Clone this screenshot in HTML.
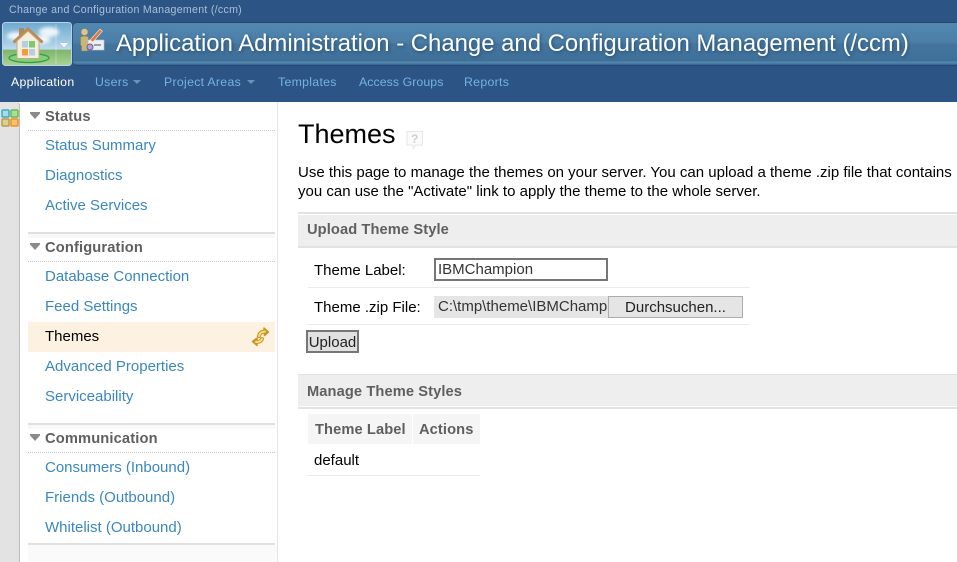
<!DOCTYPE html>
<html><head><meta charset="utf-8">
<style>
html,body{margin:0;padding:0;background:#fff}
body{width:957px;height:562px;overflow:hidden;position:relative;font-family:"Liberation Sans",sans-serif;font-size:15px;color:#000}
.a{position:absolute;white-space:nowrap}
.l{color:#3a87bd;font-size:15px;left:45px;line-height:18px}
.h{color:#5f5f5f;font-weight:bold;font-size:14.67px;left:45px;line-height:18px;letter-spacing:.15px}
.n{color:#74b3e0;font-size:12.3px;top:74px;line-height:16px;letter-spacing:.3px}
.st{left:307px;color:#5f5f5f;font-weight:bold;font-size:14.67px;line-height:18px;letter-spacing:.1px}
.line{position:absolute;height:1px;background:#eaeaea}
.dot{position:absolute;left:28px;width:247px;border-top:1px dotted #c8c8c8}
.sep{position:absolute;left:28px;width:247px;height:2px;background:#e0e0e0}
.tri{position:absolute;left:30px;width:10px;height:7px;background:#8a8a8a;clip-path:polygon(0 0,100% 0,100% 20%,50% 100%,0 20%)}
.ct{position:absolute;width:0;height:0;border-left:4px solid transparent;border-right:4px solid transparent;border-top:4px solid #6a93b8}
</style></head><body>
<div class="a" style="left:0;top:0;width:957px;height:102px;background:#2c5585"></div>
<div class="a" style="left:9px;top:3px;color:#a9c0d8;font-size:10.6px;line-height:14px;letter-spacing:.29px">Change and Configuration Management (/ccm)</div>

<svg class="a" style="left:2px;top:22px" width="70" height="44" viewBox="0 0 70 44">
<defs>
<linearGradient id="g" x1="0" y1="0" x2="0" y2="1"><stop offset="0" stop-color="#6fa9cf"/><stop offset=".5" stop-color="#a9cfe6"/><stop offset=".62" stop-color="#bcdcec"/><stop offset=".64" stop-color="#7fb56e"/><stop offset="1" stop-color="#a9d592"/></linearGradient>
<filter id="b" x="-20%" y="-20%" width="140%" height="140%"><feGaussianBlur stdDeviation="1.800"/></filter>
</defs>
<rect x=".5" y=".5" width="69" height="43" rx="3" fill="url(#g)" stroke="#b6d4e4"/>
<g filter="url(#b)" fill="#fff" fill-opacity=".85"><ellipse cx="14" cy="14" rx="9" ry="4"/><ellipse cx="47" cy="10" rx="10" ry="5"/><ellipse cx="38" cy="18" rx="10" ry="4"/></g>
<ellipse cx="27" cy="36" rx="20" ry="4.500" fill="#7fd27a" stroke="#3f9a45" stroke-width="1.300"/>
<rect x="17" y="6" width="5" height="10" fill="#a98a63"/>
<path d="M11.500 20.500 26 7 40.500 20.500" fill="none" stroke="#b98b55" stroke-width="3"/>
<path d="M15 19 26 9 37 19V36.500H15Z" fill="#f5eedd" stroke="#c9a97c"/>
<rect x="20" y="19" width="6" height="6.500" fill="#b3cfe6"/><rect x="27" y="19" width="6" height="6.500" fill="#7cc873"/>
<rect x="20" y="27" width="6" height="6.500" fill="#ef9b40"/><rect x="27" y="27" width="6" height="6.500" fill="#b3cfe6"/>
<line x1="54" y1="2" x2="54" y2="42" stroke="#fff" stroke-opacity=".3"/>
<path d="M58 21h8l-4 4z" fill="#fff"/>
</svg>

<div class="a" style="left:73px;top:23px;width:884px;height:42px;border-radius:4px 0 0 4px;background:linear-gradient(#5287ae 0,#4b7fa8 46%,#44759e 50%,#3f709a 90%,#5588ad 93%,#47789f 97%,#2f5f8c 100%);box-shadow:0 -1px 0 #234a75,0 1px 0 #234a75"></div>
<svg class="a" style="left:78px;top:26px" width="28" height="28" viewBox="0 0 28 28">
<circle cx="6.500" cy="6" r="3.500" fill="#d8c68c" stroke="#8c7f52" stroke-width=".5"/>
<path d="M2.500 11q4-2 8 0v8l-1 1v5H3.500v-5l-1-1z" fill="#c7b678" stroke="#8c7f52" stroke-width=".6"/>
<rect x="10" y="14" width="16" height="10" fill="#eef0f2" stroke="#b9c2cc" stroke-width=".6"/>
<path d="M16 19h7" stroke="#6a7f98" stroke-width="1.400"/>
<circle cx="12" cy="21" r="3" fill="#b7a6d6" stroke="#6f5c95"/>
<path d="M12 14 22 3l2.500 2L15 16z" fill="#e07a3c" stroke="#f3e9dd" stroke-width=".6"/>
</svg>
<div class="a" style="left:116px;top:28px;color:#fff;font-size:23.9px;line-height:31px;text-shadow:1px 1px 3px rgba(20,50,80,.6)">Application Administration - Change and Configuration Management (/ccm)</div>

<div class="a n" style="left:11px;color:#fff">Application</div>
<div class="a n" style="left:95px">Users</div><div class="ct" style="left:133px;top:80px"></div>
<div class="a n" style="left:164px">Project Areas</div><div class="ct" style="left:247px;top:80px"></div>
<div class="a n" style="left:278px">Templates</div>
<div class="a n" style="left:359px;letter-spacing:.08px">Access Groups</div>
<div class="a n" style="left:464px">Reports</div>

<div class="a" style="left:0;top:102px;width:19px;height:460px;background:#e3e3e3;border-right:1px solid #bdbdbd;border-radius:0 3px 0 0"></div>
<div class="a" style="left:277px;top:102px;width:1px;height:460px;background:#e6e6e6"></div>
<svg class="a" style="left:1px;top:109px" width="18" height="18" viewBox="0 0 18 18">
<rect x="1" y="1" width="7" height="7" rx="1" fill="#a8dbe8" stroke="#3fa9c4" stroke-width="1.500"/>
<rect x="10" y="1" width="7" height="7" rx="1" fill="#a9dd98" stroke="#6cba4d" stroke-width="1.500"/>
<rect x="1" y="10" width="7" height="7" rx="1" fill="#dccf92" stroke="#b39f4d" stroke-width="1.500"/>
<rect x="10" y="10" width="7" height="7" rx="1" fill="#f7c074" stroke="#ee9128" stroke-width="1.500"/>
</svg>

<div class="tri" style="top:112px"></div>
<div class="a h" style="top:108px">Status</div>
<div class="dot" style="top:130px"></div>
<div class="a l" style="top:137px">Status Summary</div>
<div class="a l" style="top:167px">Diagnostics</div>
<div class="a l" style="top:197px">Active Services</div>
<div class="sep" style="top:232px"></div>
<div class="a" style="left:28px;top:234px;width:247px;height:4px;background:#f8f8f8"></div>

<div class="tri" style="top:243px"></div>
<div class="a h" style="top:239px">Configuration</div>
<div class="dot" style="top:261px"></div>
<div class="a l" style="top:268px">Database Connection</div>
<div class="a l" style="top:298px">Feed Settings</div>
<div class="a" style="left:28px;top:322px;width:247px;height:30px;background:#fdf2e1"></div>
<div class="a l" style="top:328px;color:#000">Themes</div>
<svg class="a" style="left:250px;top:326px" width="21" height="21" viewBox="0 0 21 21">
<g fill="none" stroke-linecap="round" stroke-linejoin="round">
<path d="M9 10Q10 5.500 15 5.500" stroke="#c9962b" stroke-width="4"/>
<path d="M12 13Q11 16 6 16" stroke="#c9962b" stroke-width="4"/>
<path d="M14 2 18.500 6 14.500 9.500Z" fill="#c9962b" stroke="#c9962b" stroke-width="1.500"/>
<path d="M7 12 2.500 15.500 7 19.500Z" fill="#c9962b" stroke="#c9962b" stroke-width="1.500"/>
<path d="M9 10Q10 5.500 15 5.500" stroke="#f6dc72" stroke-width="2"/>
<path d="M12 13Q11 16 6 16" stroke="#f6dc72" stroke-width="2"/>
</g>
</svg>
<div class="a l" style="top:358px">Advanced Properties</div>
<div class="a l" style="top:388px">Serviceability</div>
<div class="sep" style="top:423px"></div>
<div class="a" style="left:28px;top:425px;width:247px;height:4px;background:#f8f8f8"></div>

<div class="tri" style="top:434px"></div>
<div class="a h" style="top:430px">Communication</div>
<div class="dot" style="top:452px"></div>
<div class="a l" style="top:459px">Consumers (Inbound)</div>
<div class="a l" style="top:489px">Friends (Outbound)</div>
<div class="a l" style="top:519px">Whitelist (Outbound)</div>
<div class="sep" style="top:543px"></div>
<div class="a" style="left:28px;top:545px;width:249px;height:17px;background:#fafafa"></div>

<div class="a" style="left:298px;top:118px;font-size:27px;line-height:33px">Themes</div>
<svg class="a" style="left:405px;top:130px" width="20" height="20" viewBox="0 0 20 20">
<path d="M2 1.500H17.500V15H11L8 18.500V15H2Z" fill="#fafafa" stroke="#e6e6e6"/>
<text x="9.700" y="13" font-family="Liberation Sans" font-size="12" font-weight="bold" fill="#cfcfcf" text-anchor="middle">?</text>
</svg>
<div class="a" style="left:298px;top:163px;line-height:19px">Use this page to manage the themes on your server. You can upload a theme .zip file that contains<br>you can use the "Activate" link to apply the theme to the whole server.</div>

<div class="a" style="left:298px;top:212px;width:659px;height:1.500px;background:#e2e2e2"></div>
<div class="a" style="left:298px;top:215px;width:659px;height:31px;background:#eee"></div>
<div class="a" style="left:298px;top:246px;width:659px;height:1.500px;background:#e2e2e2"></div>
<div class="a st" style="top:221px">Upload Theme Style</div>
<div class="a" style="left:314px;top:262px;line-height:18px">Theme Label:</div>
<div class="a" style="left:434px;top:258px;width:174px;height:23px;box-sizing:border-box;border:2px solid #767676;padding-left:2px;line-height:20px;color:#333">IBMChampion</div>
<div class="line" style="left:308px;top:287px;width:442px"></div>
<div class="a" style="left:314px;top:299px;line-height:18px">Theme .zip File:</div>
<div class="a" style="left:434px;top:296px;width:174px;height:22px;background:#e5e5e5;overflow:hidden;padding-left:4px;box-sizing:border-box;line-height:22px;color:#333">C:\tmp\theme\IBMChamp</div>
<div class="a" style="left:608px;top:296px;width:135px;height:22px;box-sizing:border-box;background:#e5e5e5;border:1px solid #adadad;text-align:center;line-height:21px;color:#222">Durchsuchen...</div>
<div class="line" style="left:308px;top:324px;width:442px"></div>
<div class="a" style="left:306px;top:330px;width:53px;height:23px;box-sizing:border-box;background:#e1e1e1;border:2px solid #767676;text-align:center;line-height:21px;color:#222">Upload</div>

<div class="a" style="left:298px;top:374px;width:659px;height:1.500px;background:#e2e2e2"></div>
<div class="a" style="left:298px;top:375px;width:659px;height:31px;background:#eee"></div>
<div class="a" style="left:298px;top:407px;width:659px;height:1.500px;background:#e2e2e2"></div>
<div class="a st" style="top:383px">Manage Theme Styles</div>
<div class="a" style="left:308px;top:414px;width:104px;height:30px;background:#f5f5f5"></div>
<div class="a" style="left:413px;top:414px;width:67px;height:30px;background:#f5f5f5"></div>
<div class="a st" style="left:315px;top:421px">Theme Label</div>
<div class="a st" style="left:419px;top:421px">Actions</div>
<div class="a" style="left:314px;top:452px;line-height:18px">default</div>
<div class="line" style="left:308px;top:475px;width:172px"></div>
</body></html>
